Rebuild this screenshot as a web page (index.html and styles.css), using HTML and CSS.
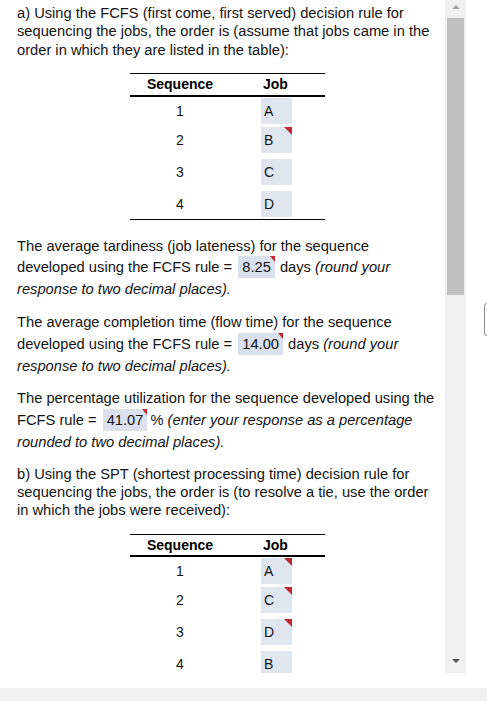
FILE: index.html
```html
<!DOCTYPE html>
<html>
<head>
<meta charset="utf-8">
<link rel="stylesheet" href="styles.css">
</head>
<body>
<div class="frame">
  <div class="viewport">
    <div class="content">
      <p class="para">a) Using the FCFS (first come, first served) decision rule for sequencing the jobs, the order is (assume that jobs came in the order in which they are listed in the table):</p>
      <table class="seq t1">
        <thead><tr><th class="c-seq">Sequence</th><th class="c-job">Job</th></tr></thead>
        <tbody>
          <tr class="near"><td class="c-seq">1</td><td class="c-job"><span class="box">A</span></td></tr>
          <tr class="near"><td class="c-seq">2</td><td class="c-job"><span class="box flag">B</span></td></tr>
          <tr><td class="c-seq">3</td><td class="c-job"><span class="box">C</span></td></tr>
          <tr><td class="c-seq">4</td><td class="c-job"><span class="box">D</span></td></tr>
        </tbody>
      </table>
      <p class="para tall">The average tardiness (job lateness) for the sequence developed using the FCFS rule = <span class="ans">8.25</span> days <i>(round your response to two decimal places).</i></p>
      <p class="para tall">The average completion time (flow time) for the sequence developed using the FCFS rule = <span class="ans">14.00</span> days <i>(round your response to two decimal places).</i></p>
      <p class="para tall">The percentage utilization for the sequence developed using the FCFS rule = <span class="ans tight">41.07</span>% <i>(enter your response as a percentage rounded to two decimal places).</i></p>
      <p class="para partb">b) Using the SPT (shortest processing time) decision rule for sequencing the jobs, the order is (to resolve a tie, use the order in which the jobs were received):</p>
      <table class="seq t2">
        <thead><tr><th class="c-seq">Sequence</th><th class="c-job">Job</th></tr></thead>
        <tbody>
          <tr class="near"><td class="c-seq">1</td><td class="c-job"><span class="box flag">A</span></td></tr>
          <tr class="near"><td class="c-seq">2</td><td class="c-job"><span class="box flag">C</span></td></tr>
          <tr><td class="c-seq">3</td><td class="c-job"><span class="box flag">D</span></td></tr>
          <tr><td class="c-seq">4</td><td class="c-job"><span class="box">B</span></td></tr>
        </tbody>
      </table>
    </div>
    <div class="scrollbar">
      <div class="arrow up"></div>
      <div class="thumb"></div>
      <div class="spacer"></div>
      <div class="arrow down"></div>
    </div>
    <div class="side"></div>
  </div>
  <div class="gap"></div>
  <div class="band"></div>
  <div class="edge"></div>
</div>
</body>
</html>
```

FILE: styles.css
```css
* { box-sizing: border-box; }
html, body { margin: 0; padding: 0; background: #fff; }
body {
  font-family: "Liberation Sans", Arial, sans-serif;
  font-size: 14.7px;
  color: #141414;
  width: 487px;
  height: 701px;
  overflow: hidden;
}
.frame { position: relative; width: 487px; height: 701px; }
.viewport {
  display: flex;
  height: 673px;
  overflow: hidden;
}
.content {
  width: 445px;
  flex: none;
  padding: 4px 6px 0 17px;
  overflow: hidden;
}
.para { margin: 0; line-height: 18.4px; }
.para.tall { line-height: 21.6px; margin-top: 11px; }
.t1 + .para.tall { margin-top: 16px; }
.para.partb { margin-top: 11px; }
.para i { font-style: italic; }

.ans {
  display: inline-block;
  position: relative;
  background: #dae1ed;
  line-height: 22px;
  height: 22px;
  padding: 0 4px 0 4px;
  margin: 0 1px 0 2px;
  vertical-align: middle;
  top: -1px;
}
.ans.tight { margin-right: 3px; }
.ans::after {
  content: "";
  position: absolute;
  right: 0;
  top: 0;
  border-top: 6px solid #c1272d;
  border-left: 5px solid transparent;
}

.seq {
  border-collapse: collapse;
  margin: 0 0 0 113px;
  width: 195px;
  border-top: 1px solid #000;
  border-bottom: 1.5px solid #000;
  font-size: 14px;
}
.t1 { margin-top: 14px; }
.t2 { margin-top: 14px; }
.seq th {
  font-weight: bold;
  height: 22px;
  padding: 0;
  border-bottom: 2px solid #000;
  color: #000;
  vertical-align: middle;
}
.seq .c-seq { width: 100px; text-align: center; }
.seq .c-job { width: 95px; text-align: left; padding-left: 31px; }
.seq th.c-job { padding-left: 33px; }
.seq td { padding: 4px 0 2px; vertical-align: middle; }
.seq td.c-job { padding-left: 31px; }
.seq tr.near td { padding-top: 1px; }
.box {
  display: block;
  position: relative;
  width: 31px;
  height: 26px;
  line-height: 27px;
  background: #e0e6f0;
  padding-left: 3px;
}
.box.flag::after {
  content: "";
  position: absolute;
  right: 0;
  top: 0;
  border-top: 8px solid #c1272d;
  border-left: 8px solid transparent;
}

.scrollbar {
  width: 21px;
  flex: none;
  background: #f0f0f0;
  display: flex;
  flex-direction: column;
  align-items: center;
}
.arrow { width: 0; height: 0; border-left: 4px solid transparent; border-right: 4px solid transparent; }
.arrow.up { border-bottom: 4px solid #a3a3a3; margin-top: 5px; margin-bottom: 9px; }
.thumb { width: 17px; height: 277px; background: #c1c1c1; }
.spacer { flex: 1; }
.arrow.down { border-top: 4px solid #505050; margin-bottom: 10px; }
.side { flex: 1; background: #fff; }
.gap { height: 15px; background: #fff; }
.band { height: 13px; background: #f0f0f0; }
.edge {
  position: absolute;
  left: 484px;
  top: 303px;
  width: 12px;
  height: 33px;
  border: 1px solid #8a8a8a;
  border-radius: 3px;
}
```
